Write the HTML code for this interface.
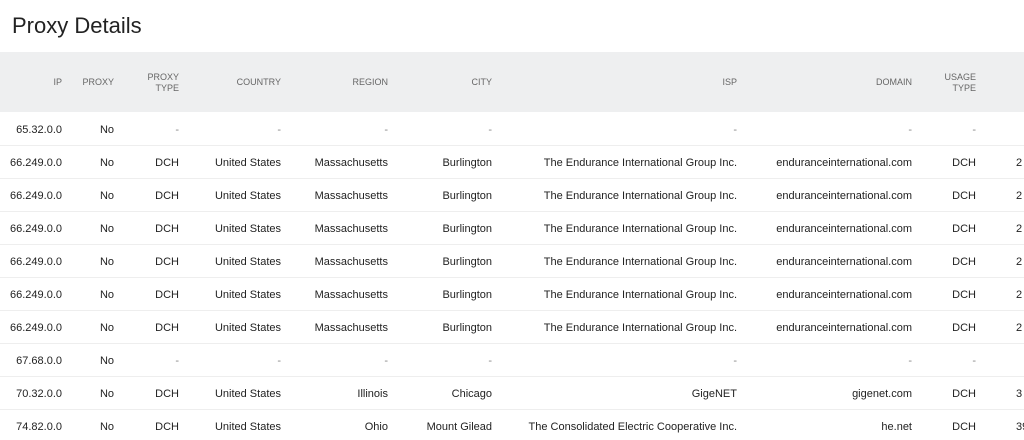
<!DOCTYPE html><html><head><style>
body{margin:0;width:1024px;height:440px;overflow:hidden;background:#fff;font-family:"Liberation Sans",sans-serif;color:#222;position:relative}
h1{position:absolute;left:12px;top:13px;margin:0;font-weight:normal;font-size:22px;color:#222}
.hd{position:absolute;left:0;top:52px;width:1024px;height:60px;background:#eeeff0}
.c{position:absolute;text-align:right;white-space:nowrap;font-size:11px;line-height:13px}
.h{color:#666;font-size:9px;line-height:11px}
.ln{position:absolute;left:0;width:1024px;height:1px;background:#eeeeee}
</style></head><body>
<h1>Proxy Details</h1>
<div class="hd"></div>
<div id="t"></div>
<script>
var R=[62,114,179,281,388,492,737,912,976];
var H=["IP","PROXY","PROXY<br>TYPE","COUNTRY","REGION","CITY","ISP","DOMAIN","USAGE<br>TYPE"];
var s="";
H.forEach(function(h,i){var two=h.indexOf("<br>")>0;s+='<div class="c h" style="right:'+(1024-R[i])+'px;top:'+(two?72:77)+'px">'+h+'</div>';});
var rows=[["65.32.0.0","No","-","-","-","-","-","-","-",""]];
for(var k=0;k<6;k++)rows.push(["66.249.0.0","No","DCH","United States","Massachusetts","Burlington","The Endurance International Group Inc.","enduranceinternational.com","DCH","2"]);
rows.push(["67.68.0.0","No","-","-","-","-","-","-","-",""]);
rows.push(["70.32.0.0","No","DCH","United States","Illinois","Chicago","GigeNET","gigenet.com","DCH","3"]);
rows.push(["74.82.0.0","No","DCH","United States","Ohio","Mount Gilead","The Consolidated Electric Cooperative Inc.","he.net","DCH","39"]);
rows.forEach(function(r,j){var cy=129+33*j;
for(var i=0;i<9;i++){s+='<div class="c" style="right:'+(1024-R[i])+'px;top:'+(cy-5)+'px;'+(r[i]=="-"?'color:#888':'')+'">'+r[i]+'</div>';}
if(r[9])s+='<div class="c" style="left:1016px;top:'+(cy-5)+'px;text-align:left">'+r[9]+'</div>';
if(j<9)s+='<div class="ln" style="top:'+(cy+16)+'px"></div>';});
document.getElementById("t").innerHTML=s;
</script>
</body></html>
